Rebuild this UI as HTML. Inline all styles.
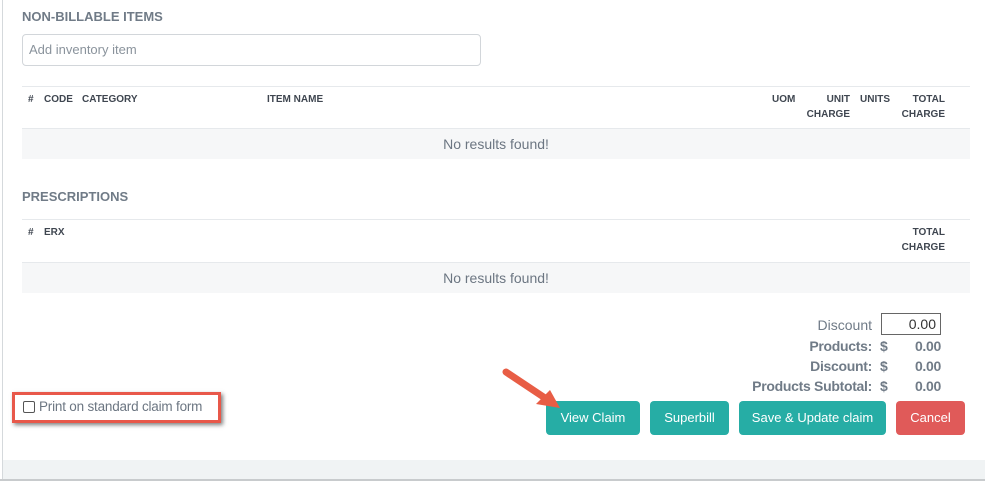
<!DOCTYPE html>
<html><head><meta charset="utf-8"><style>
body{margin:0;width:985px;height:481px;overflow:hidden;background:#fff;font-family:"Liberation Sans",Arial,sans-serif;color:#6c7682;position:relative}
.a{position:absolute}
.h{font-weight:bold;font-size:13px;color:#707b87}
.th{font-weight:bold;font-size:10px;color:#3f4650;line-height:15px}
.nr{background:#f6f7f8;text-align:center;font-size:14px;color:#6c7682;line-height:30px}
.line{height:1px;background:#e6e9ec}
.btn{position:absolute;top:401px;height:34px;border-radius:4px;background:#26ada5;color:#fff;font-size:13px;line-height:34px;text-align:center}
.tot{font-weight:bold;font-size:14px;color:#707b87;text-align:right;letter-spacing:-0.3px}
</style></head><body>
<div class="a" style="left:2px;top:0;width:1px;height:481px;background:#d5d9dc"></div>
<div class="a" style="left:3px;top:460px;width:982px;height:19px;background:#f0f3f4"></div>
<div class="a" style="left:0;top:479px;width:985px;height:2px;background:#c8cbcd"></div>

<div class="a h" style="left:22px;top:9px">NON-BILLABLE ITEMS</div>
<div class="a" style="left:22px;top:34px;border:1px solid #d2d6da;border-radius:4px;font-size:13px;color:#8a939c;line-height:30px;text-indent:6px;box-sizing:border-box;width:459px;height:32px">Add inventory item</div>
<div class="a line" style="left:22px;top:86px;width:948px"></div>
<div class="a th" style="left:28px;top:92px">#</div>
<div class="a th" style="left:44px;top:92px">CODE</div>
<div class="a th" style="left:82px;top:92px">CATEGORY</div>
<div class="a th" style="left:267px;top:92px">ITEM NAME</div>
<div class="a th" style="left:772px;top:92px">UOM</div>
<div class="a th" style="left:800px;top:92px;width:50px;text-align:right">UNIT<br>CHARGE</div>
<div class="a th" style="left:860px;top:92px">UNITS</div>
<div class="a th" style="left:895px;top:92px;width:50px;text-align:right">TOTAL<br>CHARGE</div>
<div class="a line" style="left:22px;top:128px;width:948px"></div>
<div class="a nr" style="left:22px;top:129px;width:948px">No results found!</div>

<div class="a h" style="left:22px;top:189px">PRESCRIPTIONS</div>
<div class="a line" style="left:22px;top:219px;width:948px"></div>
<div class="a th" style="left:28px;top:225px">#</div>
<div class="a th" style="left:44px;top:225px">ERX</div>
<div class="a th" style="left:895px;top:225px;width:50px;text-align:right">TOTAL<br>CHARGE</div>
<div class="a line" style="left:22px;top:262px;width:948px"></div>
<div class="a nr" style="left:22px;top:263px;width:948px">No results found!</div>

<div class="a" style="left:780px;top:317px;width:92px;text-align:right;font-size:14px;color:#707b87">Discount</div>
<div class="a" style="left:881px;top:313px;width:60px;height:22px;border:1px solid #666;box-sizing:border-box;text-align:right;font-size:14px;line-height:20px;padding-right:4px;color:#333">0.00</div>
<div class="a tot" style="left:700px;top:338px;width:172px">Products:</div>
<div class="a tot" style="left:700px;top:358px;width:172px">Discount:</div>
<div class="a tot" style="left:700px;top:378px;width:172px">Products Subtotal:</div>
<div class="a tot" style="left:880px;top:338px;text-align:left">$</div>
<div class="a tot" style="left:880px;top:358px;text-align:left">$</div>
<div class="a tot" style="left:880px;top:378px;text-align:left">$</div>
<div class="a tot" style="left:900px;top:338px;width:41px">0.00</div>
<div class="a tot" style="left:900px;top:358px;width:41px">0.00</div>
<div class="a tot" style="left:900px;top:378px;width:41px">0.00</div>

<div class="btn" style="left:546px;width:94px">View Claim</div>
<div class="btn" style="left:650px;width:79px">Superbill</div>
<div class="btn" style="left:739px;width:147px">Save &amp; Update claim</div>
<div class="btn" style="left:896px;width:69px;background:#e05a59">Cancel</div>

<svg class="a" style="left:498px;top:364px" width="70" height="50"><line x1="8" y1="8" x2="50" y2="36" stroke="#e85d45" stroke-width="7" stroke-linecap="round"/><polygon points="62,44 38,40 52,26" fill="#e85d45"/></svg>

<div class="a" style="left:12px;top:392px;width:209px;height:31px;border:3px solid #e8584a;box-shadow:2px 2px 4px rgba(0,0,0,.5);box-sizing:border-box"></div>
<div class="a" style="left:23px;top:401px;width:10px;height:10px;border:1px solid #555;border-radius:2px"></div>
<div class="a" style="left:39px;top:399px;font-size:13.5px;letter-spacing:-0.2px;color:#6c7682">Print on standard claim form</div>
</body></html>
